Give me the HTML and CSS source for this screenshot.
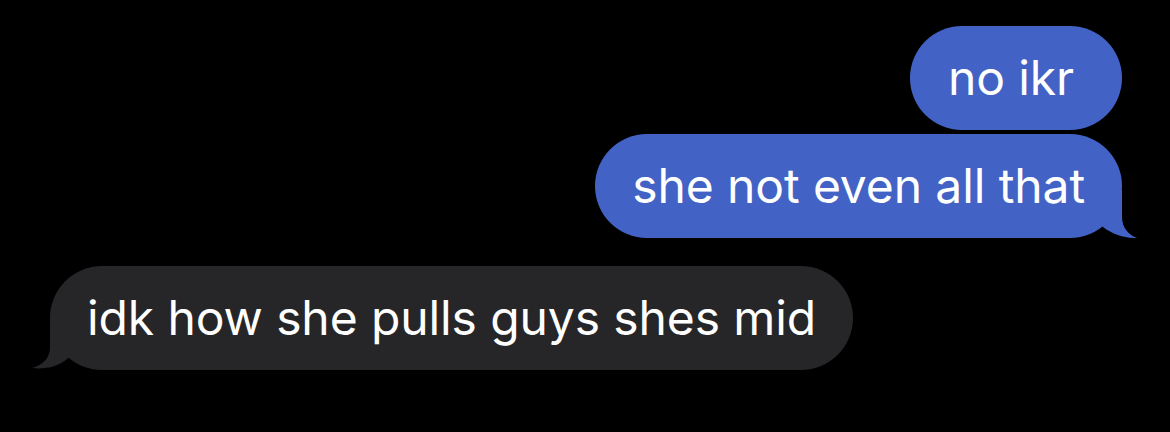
FILE: index.html
```html
<!DOCTYPE html>
<html lang="en">
<head>
<meta charset="utf-8">
<title>Messages</title>
<link rel="stylesheet" href="styles.css">
</head>
<body>
<main class="thread">
  <div class="group group--sent">
    <div class="bubble bubble--sent bubble--short">no ikr</div>
    <div class="bubble bubble--sent bubble--tail">she not even all that
      <svg class="tail tail--sent" viewBox="0 0 40 48" width="40" height="48" aria-hidden="true"><path d="M0 0 L25 0 L25 27 C25 38 32 45 40 48 C30 48.5 16 45 6 37 L0 30 Z"/></svg>
    </div>
  </div>
  <div class="group group--received">
    <div class="bubble bubble--received bubble--tail">idk how she pulls guys shes mid
      <svg class="tail tail--received" viewBox="0 0 43 48" width="43" height="48" aria-hidden="true"><path d="M43 0 L18 0 L18 25 C18 36 11 43 0 46 C12 47.5 26 45 35 37 L43 30 Z"/></svg>
    </div>
  </div>
</main>
</body>
</html>
```

FILE: styles.css
```css
html, body {
  margin: 0;
  padding: 0;
  background: #000;
}

body {
  width: 1170px;
  height: 432px;
  overflow: hidden;
  font-family: Inter, "Noto Sans", "Liberation Sans", sans-serif;
  -webkit-font-smoothing: antialiased;
}

.thread {
  display: flex;
  flex-direction: column;
  gap: 28px;
  padding: 26px 48px 0 50px;
}

.group {
  display: flex;
  flex-direction: column;
  gap: 4px;
}

.group--sent {
  align-items: flex-end;
}

.group--received {
  align-items: flex-start;
}

.bubble {
  position: relative;
  box-sizing: border-box;
  height: 104px;
  display: flex;
  align-items: center;
  padding: 0 37px 2px;
  border-radius: 52px;
  color: #fff;
  font-size: 48px;
  font-weight: 400;
  letter-spacing: -0.1px;
  white-space: nowrap;
}

.bubble--sent {
  background: #4263c5;
}

.bubble--short {
  padding: 0 48px 2px 38px;
}

.bubble--received {
  background: #262628;
}

.tail {
  position: absolute;
  bottom: 0;
}

.tail--sent {
  right: -15px;
  fill: #4263c5;
}

.tail--received {
  left: -18px;
  fill: #262628;
}
```
